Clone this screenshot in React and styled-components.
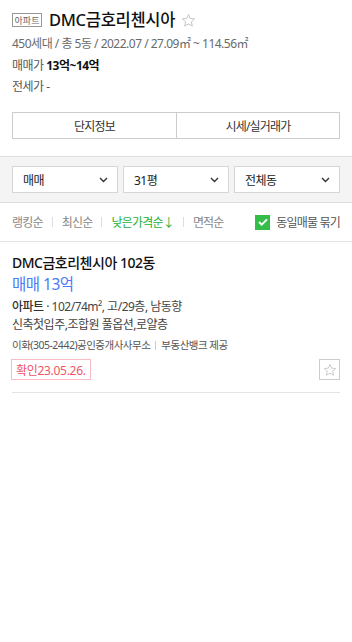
import styled, { createGlobalStyle } from 'styled-components';

const GlobalStyle = createGlobalStyle`
  * { box-sizing: border-box; }
  body {
    margin: 0;
    background: #fff;
    font-family: "Noto Sans", "Noto Sans CJK KR", sans-serif;
    color: #222;
    letter-spacing: -0.5px;
  }
`;

const Page = styled.div`
  width: 352px;
  min-height: 642px;
  background: #fff;
`;

const Summary = styled.section`
  padding: 9px 12px 17px;
`;

const TitleRow = styled.div`
  display: flex;
  align-items: center;
  height: 22px;
`;

const TypeBadge = styled.span`
  display: inline-flex;
  align-items: center;
  justify-content: center;
  width: 30px;
  height: 14px;
  border: 1px solid #999;
  font-size: 9px;
  letter-spacing: 0;
  line-height: 1;
  color: #666;
  margin-right: 7px;
`;

const Title = styled.h1`
  margin: 0;
  font-size: 16.5px;
  font-weight: 500;
  line-height: 22px;
  letter-spacing: -0.3px;
  color: #111;
`;

const StarIcon = ({ size = 14, color = '#bbb' }) => (
  <svg width={size} height={size} viewBox="0 0 24 24" fill="none">
    <path
      d="M12 2.5l2.9 6.3 6.9.7-5.2 4.6 1.5 6.8L12 17.4l-6.1 3.5 1.5-6.8-5.2-4.6 6.9-.7z"
      stroke={color}
      strokeWidth="1.6"
      strokeLinejoin="round"
    />
  </svg>
);

const TitleStar = styled.span`
  display: inline-flex;
  margin-left: 6px;
`;

const Meta = styled.p`
  margin: 0;
  font-size: 12px;
  line-height: 21px;
  color: ${(p) => p.$color || '#6a6a6a'};
  margin-top: ${(p) => p.$top || 0}px;
`;

const Strong = styled.b`
  font-weight: 700;
  color: #111;
`;

const TabGroup = styled.div`
  display: grid;
  grid-template-columns: 1fr 1fr;
  margin-top: 15px;
  border: 1px solid #ccc;
`;

const TabButton = styled.button`
  height: 25px;
  border: 0;
  border-left: ${(p) => (p.$first ? '0' : '1px solid #ccc')};
  background: #fff;
  font-family: inherit;
  font-size: 12px;
  letter-spacing: -0.8px;
  color: #333;
  padding: 0;
`;

const FilterBar = styled.div`
  display: grid;
  grid-template-columns: repeat(3, 1fr);
  gap: 5px;
  padding: 9px 12px;
  background: #f4f4f4;
  border-top: 1px solid #ddd;
  border-bottom: 1px solid #ddd;
`;

const Select = styled.div`
  display: flex;
  align-items: center;
  justify-content: space-between;
  height: 27px;
  padding: 0 9px 0 10px;
  background: #fff;
  border: 1px solid #d6d6d6;
  font-size: 12px;
  color: #222;
`;

const Chevron = () => (
  <svg width="9" height="6" viewBox="0 0 9 6" fill="none">
    <path d="M1 1l3.5 3.5L8 1" stroke="#333" strokeWidth="1.4" />
  </svg>
);

const SortBar = styled.div`
  display: flex;
  align-items: center;
  height: 39px;
  padding: 0 12px;
  border-bottom: 1px solid #e4e4e4;
`;

const SortItem = styled.span`
  font-size: 12px;
  letter-spacing: -0.8px;
  color: ${(p) => (p.$active ? '#22b13a' : '#888')};
`;

const SortDivider = styled.span`
  width: 1px;
  height: 10px;
  background: #ddd;
  margin: 0 9px;
`;

const GroupToggle = styled.label`
  margin-left: auto;
  display: flex;
  align-items: center;
  gap: 6px;
  font-size: 12px;
  letter-spacing: -0.8px;
  color: #555;
`;

const CheckBox = styled.span`
  display: inline-flex;
  align-items: center;
  justify-content: center;
  width: 15px;
  height: 15px;
  background: #35bd4a;
`;

const Listing = styled.article`
  margin: 0 12px;
  padding: 11px 0 12px;
  border-bottom: 1px solid #e4e4e4;
`;

const ListingTitle = styled.h2`
  margin: 0;
  font-size: 14px;
  font-weight: 500;
  line-height: 20px;
  color: #111;
`;

const Price = styled.p`
  margin: 0;
  font-size: 15.5px;
  line-height: 22px;
  color: #4a7cf6;
`;

const Spec = styled.p`
  margin: 3px 0 0;
  font-size: 12px;
  line-height: 18px;
  color: #444;
`;

const SpecType = styled.b`
  font-weight: 500;
  color: #333;
`;

const Tags = styled.p`
  margin: 0;
  font-size: 12px;
  line-height: 18px;
  color: #444;
`;

const Agent = styled.p`
  display: flex;
  align-items: center;
  margin: 3px 0 0;
  font-size: 10.5px;
  line-height: 16px;
  color: #555;
`;

const AgentDivider = styled.span`
  width: 1px;
  height: 9px;
  background: #ccc;
  margin: 0 5px;
`;

const CardFooter = styled.div`
  display: flex;
  align-items: center;
  justify-content: space-between;
  margin-top: 6px;
`;

const ConfirmBadge = styled.span`
  display: inline-flex;
  align-items: center;
  height: 21px;
  margin-left: -1px;
  padding: 0 4px;
  border: 1px solid #f9bcc4;
  font-size: 12px;
  letter-spacing: -0.3px;
  color: #f05566;
`;

const FavButton = styled.button`
  display: inline-flex;
  align-items: center;
  justify-content: center;
  width: 21px;
  height: 21px;
  padding: 0;
  border: 1px solid #ccc;
  background: #fff;
`;

export default function App() {
  return (
    <Page>
      <GlobalStyle />
      <Summary>
        <TitleRow>
          <TypeBadge>아파트</TypeBadge>
          <Title>DMC금호리첸시아</Title>
          <TitleStar>
            <StarIcon size={15} color="#c4c4c4" />
          </TitleStar>
        </TitleRow>
        <Meta $top={2}>450세대 / 총 5동 / 2022.07 / 27.09㎡ ~ 114.56㎡</Meta>
        <Meta $top={1} $color="#555">
          매매가 <Strong>13억~14억</Strong>
        </Meta>
        <Meta $color="#555">전세가 -</Meta>
        <TabGroup>
          <TabButton $first>단지정보</TabButton>
          <TabButton>시세/실거래가</TabButton>
        </TabGroup>
      </Summary>

      <FilterBar>
        <Select>
          매매 <Chevron />
        </Select>
        <Select>
          31평 <Chevron />
        </Select>
        <Select>
          전체동 <Chevron />
        </Select>
      </FilterBar>

      <SortBar>
        <SortItem>랭킹순</SortItem>
        <SortDivider />
        <SortItem>최신순</SortItem>
        <SortDivider />
        <SortItem $active>낮은가격순↓</SortItem>
        <SortDivider />
        <SortItem>면적순</SortItem>
        <GroupToggle>
          <CheckBox>
            <svg width="10" height="8" viewBox="0 0 10 8" fill="none">
              <path d="M1 4l2.7 2.7L9 1.3" stroke="#fff" strokeWidth="1.8" />
            </svg>
          </CheckBox>
          동일매물 묶기
        </GroupToggle>
      </SortBar>

      <Listing>
        <ListingTitle>DMC금호리첸시아 102동</ListingTitle>
        <Price>매매 13억</Price>
        <Spec>
          <SpecType>아파트</SpecType> · 102/74m², 고/29층, 남동향
        </Spec>
        <Tags>신축첫입주,조합원 풀옵션,로얄층</Tags>
        <Agent>
          이화(305-2442)공인중개사사무소
          <AgentDivider />
          부동산뱅크 제공
        </Agent>
        <CardFooter>
          <ConfirmBadge>확인23.05.26.</ConfirmBadge>
          <FavButton aria-label="관심">
            <StarIcon size={14} color="#c8c8c8" />
          </FavButton>
        </CardFooter>
      </Listing>
    </Page>
  );
}
